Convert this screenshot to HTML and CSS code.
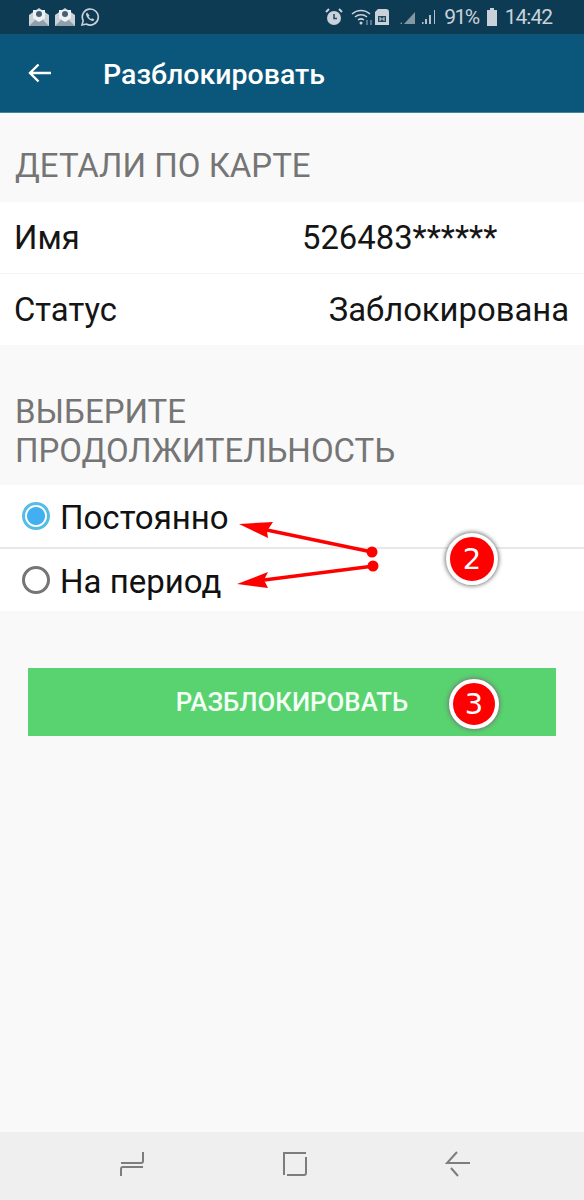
FILE: index.html

```html
<!DOCTYPE html>
<html lang="ru">
<head>
  <meta charset="UTF-8">
  <meta name="viewport" content="width=device-width, initial-scale=1.0">
  <title>Разблокировать</title>
  <link rel="stylesheet" href="styles.css">
</head>
<body>
  <div class="screen">
    <div class="status-bar">
      <div class="status-left">
        <svg class="mail-icon" viewBox="0 0 22 20"><path d="M1 8 11 1l10 7v11H1z" fill="#c9d2d8"/><path d="M5 3h12v8l-6 4-6-4z" fill="#eef1f3"/><circle cx="11" cy="7" r="3" fill="#47606f"/><path d="M1 19l6-6 4 2 4-2 6 6z" fill="#8fa0ab"/></svg>
        <svg class="mail-icon" viewBox="0 0 22 20"><path d="M1 8 11 1l10 7v11H1z" fill="#c9d2d8"/><path d="M5 3h12v8l-6 4-6-4z" fill="#eef1f3"/><circle cx="11" cy="7" r="3" fill="#47606f"/><path d="M1 19l6-6 4 2 4-2 6 6z" fill="#8fa0ab"/></svg>
        <svg class="whatsapp-icon" viewBox="0 0 20 20"><path d="M2 18l1.2-4.2A8 8 0 1 1 6.300 17z" fill="none" stroke="#c9d2d8" stroke-width="1.600"/><path d="M7 5.500 6 6.800c0 3.500 3.500 7 7.200 7.200l1.300-1.300-2.200-1.500-1 .8c-1-.4-2.200-1.600-2.600-2.600l.8-1z" fill="#c9d2d8"/></svg>
      </div>
      <div class="status-right">
        <svg class="alarm-icon" viewBox="0 0 18 18"><circle cx="9" cy="10" r="7" fill="#c9d2d8"/><path d="M9 6v4.500h3" fill="none" stroke="#21485f" stroke-width="1.500"/><path d="M1 4l3-3M17 4l-3-3" stroke="#c9d2d8" stroke-width="2"/></svg>
        <svg class="wifi-icon" viewBox="0 0 22 18"><path d="M1 6a13 13 0 0 1 18 0M4 9a9 9 0 0 1 12 0M7 12a5 5 0 0 1 6 0" fill="none" stroke="#c9d2d8" stroke-width="1.500"/><circle cx="10" cy="15" r="1.500" fill="#c9d2d8"/><path d="M16 12v5M20 17v-5" stroke="#8fa0ab" stroke-width="1.200"/></svg>
        <svg class="sim-icon" viewBox="0 0 16 18"><path d="M1 4l3-3h8a3 3 0 0 1 3 3v13H1z" fill="#c9d2d8"/><rect x="4" y="8" width="8" height="6" fill="#21485f"/><path d="M6 9v4M10 9v4M6 11h4" stroke="#c9d2d8"/></svg>
        <svg class="signal-icon" viewBox="0 0 38 16"><path d="M1 15l2-2v2zM5 15 16 3v12z" fill="#8497a3"/><path d="M23 15v-2h1.500v2zM26 15v-5h2v5zM30 15V6h2v9zM35 15V1h1v14z" fill="#b4c0c7"/></svg>
        <span class="battery-text">91%</span>
        <svg class="battery-icon" viewBox="0 0 12 18"><path d="M4 0h4v2h3v16H1V2h3z" fill="#c9d2d8"/></svg>
        <span class="time-text">14:42</span>
      </div>
    </div>

    <header class="toolbar">
      <svg class="back-icon" viewBox="0 0 24 20"><path d="M23 10H2M10.500 1.500 2 10l8.500 8.500" fill="none" stroke="#fff" stroke-width="2.400"/></svg>
      <h1>Разблокировать</h1>
    </header>

    <h2 class="section-title title-card">ДЕТАЛИ ПО КАРТЕ</h2>
    <div class="rows">
      <div class="row">
        <span>Имя</span>
        <span class="card-number">526483******</span>
      </div>
      <div class="row">
        <span>Статус</span>
        <span>Заблокирована</span>
      </div>
    </div>

    <h2 class="section-title title-period">ВЫБЕРИТЕ ПРОДОЛЖИТЕЛЬНОСТЬ</h2>
    <div class="options">
      <div class="option">
        <span class="radio radio-on"></span>
        <span class="option-label">Постоянно</span>
      </div>
      <div class="option">
        <span class="radio"></span>
        <span class="option-label">На период</span>
      </div>
      <svg class="arrows" viewBox="0 0 584 130">
        <path d="M372 67 262 44" stroke="#f00" stroke-width="3.500"/>
        <path d="M374 81 264 95" stroke="#f00" stroke-width="3.500"/>
        <path d="M239 39l34-2-6 9 1 7z" fill="#f00"/>
        <path d="M237 99l31-12-4 8 4 8z" fill="#f00"/>
        <circle cx="372" cy="67" r="5.500" fill="#f00"/>
        <circle cx="373" cy="81" r="5.500" fill="#f00"/>
      </svg>
      <span class="badge badge-two">2</span>
    </div>

    <button type="button" class="unlock-button">
      РАЗБЛОКИРОВАТЬ
      <span class="badge badge-three">3</span>
    </button>

    <nav class="nav-bar">
      <svg class="nav-icon" viewBox="0 0 26 28"><path d="M24 2v9a2 2 0 0 1-2 2H2M2 26v-7a2 2 0 0 1 2-2h20" fill="none" stroke="#7d7d7d" stroke-width="2"/></svg>
      <svg class="nav-icon" viewBox="0 0 26 28"><path d="M24 3H2v22M5 25h17a2 2 0 0 0 2-2V7" fill="none" stroke="#7d7d7d" stroke-width="2"/></svg>
      <svg class="nav-icon" viewBox="0 0 26 28"><path d="M25 13H2L12 2M6 18l7 8" fill="none" stroke="#7d7d7d" stroke-width="2"/></svg>
    </nav>
  </div>
</body>
</html>
```

FILE: styles.css

```css
* {
  box-sizing: border-box;
}
body {
  margin: 0;
  font-family: Roboto, "Liberation Sans", sans-serif;
  background-color: #f9f9f9;
}
.screen {
  display: flex;
  flex-direction: column;
  height: 1200px;
}
.status-bar {
  display: flex;
  justify-content: space-between;
  align-items: center;
  height: 34px;
  padding: 0 32px 0 28px;
  background-color: #0e3b54;
  color: #c9d2d8;
}
.status-left,
.status-right {
  display: flex;
  align-items: center;
}
.status-left {
  gap: 4px;
}
.mail-icon {
  width: 22px;
  height: 20px;
}
.whatsapp-icon {
  width: 20px;
  height: 20px;
}
.alarm-icon {
  width: 18px;
  height: 18px;
  margin-right: 8px;
}
.wifi-icon {
  width: 22px;
  height: 18px;
  margin-right: 1px;
}
.sim-icon {
  width: 16px;
  height: 18px;
  margin-right: 9px;
}
.signal-icon {
  width: 38px;
  height: 16px;
  margin-right: 7px;
}
.battery-text,
.time-text {
  font-size: 21px;
  letter-spacing: -1px;
}
.battery-text {
  letter-spacing: -1.500px;
}
.battery-icon {
  width: 12px;
  height: 18px;
  margin: 0 7px;
}
.toolbar {
  display: flex;
  align-items: center;
  height: 79px;
  padding: 3px 0 0 28px;
  background-color: #0b577c;
  border-bottom: 1px solid #3d8a96;
}
.back-icon {
  width: 24px;
  height: 20px;
  margin: -3px 51px 0 0;
}
.toolbar h1 {
  margin: 0;
  color: #fff;
  font-size: 28.500px;
  font-weight: 500;
}
.section-title {
  margin: 0;
  padding: 0 15px;
  color: #757575;
  font-size: 33px;
  font-weight: 400;
  line-height: 39px;
}
.title-card {
  padding-top: 33px;
  padding-bottom: 17px;
}
.title-period {
  padding-top: 47px;
  padding-bottom: 15px;
}
.rows {
  display: flex;
  flex-direction: column;
  gap: 1px;
  background-color: #f4f4f4;
}
.row {
  display: flex;
  justify-content: space-between;
  align-items: center;
  height: 71px;
  padding: 0 15px 0 14px;
  background-color: #fff;
  color: #151515;
  font-size: 32.800px;
}
.card-number {
  width: 267px;
}
.options {
  position: relative;
  background-color: #fff;
}
.option {
  display: flex;
  align-items: center;
  gap: 10px;
  height: 62px;
  padding-left: 22px;
  color: #111;
  font-size: 33px;
}
.option + .option {
  height: 64px;
  border-top: 2px solid #e8e8e8;
}
.option-label {
  margin-top: 3px;
}
.radio {
  width: 28px;
  height: 28px;
  border: 3px solid #757575;
  border-radius: 50%;
}
.radio-on {
  border-color: #56bbe6;
  background: radial-gradient(circle, #42b0f0 0 8.500px, #fff 9.500px);
}
.arrows {
  position: absolute;
  top: 0;
  left: 0;
  width: 584px;
  height: 130px;
  pointer-events: none;
}
.badge {
  position: absolute;
  display: flex;
  justify-content: center;
  align-items: center;
  width: 50px;
  height: 50px;
  border: 4px solid #fff;
  border-radius: 50%;
  background-color: #f00;
  box-shadow: 0 0 4px 1px #777;
  color: #fff;
  font-family: "DejaVu Sans", sans-serif;
  font-size: 29px;
  font-weight: 400;
}
.badge-two {
  top: 48px;
  left: 446px;
  width: 52px;
  height: 52px;
}
.badge-three {
  top: 11px;
  left: 421px;
}
.unlock-button {
  position: relative;
  width: 528px;
  height: 68px;
  margin: 57px 0 0 28px;
  border: none;
  background-color: #58d36f;
  color: #f4fff6;
  font-family: inherit;
  font-size: 25.800px;
  font-weight: 500;
}
.nav-bar {
  display: flex;
  justify-content: space-between;
  align-items: center;
  height: 68px;
  margin-top: auto;
  padding: 0 113px 4px 119px;
  background-color: #efefef;
}
.nav-icon {
  width: 26px;
  height: 28px;
}
```
